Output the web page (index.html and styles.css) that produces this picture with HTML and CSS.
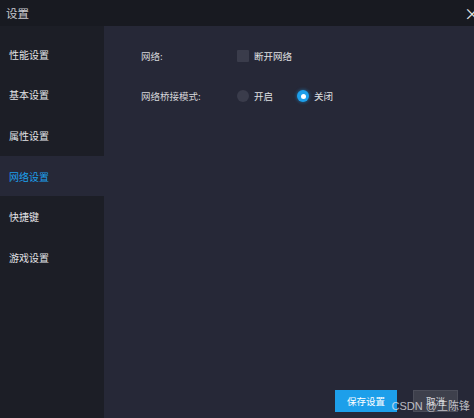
FILE: index.html
```html
<!DOCTYPE html>
<html lang="zh-CN">
<head>
  <meta charset="UTF-8"/>
  <title>设置</title>
  <link rel="stylesheet" href="styles.css">
</head>
<body>
  <div class="window">
    <header class="titlebar">
      <span class="title">设置</span>
      <span class="close-btn">×</span>
    </header>
    <div class="layout">
      <aside class="menu">
        <div class="menu-item">性能设置</div>
        <div class="menu-item">基本设置</div>
        <div class="menu-item">属性设置</div>
        <div class="menu-item active">网络设置</div>
        <div class="menu-item">快捷键</div>
        <div class="menu-item">游戏设置</div>
      </aside>
      <main class="panel">
        <div class="form">
          <div class="row">
            <span class="label">网络:</span>
            <label class="option">
              <span class="checkbox"></span>断开网络
            </label>
          </div>
          <div class="row">
            <span class="label">网络桥接模式:</span>
            <label class="option">
              <span class="radio"></span>开启
            </label>
            <label class="option">
              <span class="radio checked"></span>关闭
            </label>
          </div>
        </div>
        <footer class="actions">
          <button class="btn btn-primary">保存设置</button>
          <button class="btn btn-cancel">取消</button>
        </footer>
        <span class="watermark">CSDN @王陈锋</span>
      </main>
    </div>
  </div>
</body>
</html>
```

FILE: styles.css
```css
:root {
  --bg-title: #181a21;
  --bg-menu: #1c1e26;
  --bg-panel: #262837;
  --text: #d6d7db;
  --text-title: #c9cacf;
  --accent: #1d9fea;
  --control: #3a3c4b;
}

* { box-sizing:border-box; margin:0; padding:0 }
html, body {
  width:474px;
  height:418px;
  overflow:hidden;
  background: var(--bg-panel);
  font-family:"Noto Sans CJK SC","Noto Sans",sans-serif;
  color: var(--text);
}

.window {
  display:flex;
  flex-direction:column;
  height:100%;
}

/* TITLE BAR */
.titlebar {
  height:26px;
  flex:none;
  display:flex;
  align-items:center;
  justify-content:space-between;
  padding-left:6px;
  background: var(--bg-title);
  overflow:hidden;
}
.title {
  font-size:11.5px;
  color: var(--text-title);
}
.close-btn {
  font-size:16px;
  color:#e8e8e8;
  margin-right:-6px;
  line-height:1;
}

/* LAYOUT */
.layout {
  flex:1;
  display:flex;
  min-height:0;
}

/* MENU */
.menu {
  width:104px;
  flex:none;
  background: var(--bg-menu);
  padding-top:8px;
}
.menu-item {
  height:40.6px;
  display:flex;
  align-items:center;
  padding-left:9px;
  font-size:10px;
  color:#e2e3e6;
}
.menu-item.active {
  background: var(--bg-panel);
  color: var(--accent);
}

/* PANEL */
.panel {
  flex:1;
  display:flex;
  flex-direction:column;
  position:relative;
  padding:20px 16px 6px 37px;
}
.form {
  display:flex;
  flex-direction:column;
  gap:20px;
}
.row {
  display:flex;
  align-items:center;
  height:20px;
  font-size:9.5px;
}
.label {
  width:96px;
  color: var(--text);
}
.option {
  display:flex;
  align-items:center;
  gap:5px;
  margin-right:24px;
  color:#e0e1e4;
}
.checkbox {
  width:12px;
  height:12px;
  border-radius:1px;
  background: var(--control);
}
.radio {
  width:12px;
  height:12px;
  border-radius:50%;
  background: var(--control);
}
.radio.checked {
  background: var(--accent);
  box-shadow:0 0 3px 1px rgba(29,159,234,.35);
  display:flex;
  align-items:center;
  justify-content:center;
}
.radio.checked::after {
  content:"";
  width:5px;
  height:5px;
  border-radius:50%;
  background:#fff;
}

/* ACTIONS */
.actions {
  margin-top:auto;
  display:flex;
  justify-content:flex-end;
  gap:16px;
}
.btn {
  height:22px;
  border:none;
  font-family:inherit;
  font-size:9.5px;
  color:#fff;
}
.btn-primary {
  width:62px;
  background: var(--accent);
}
.btn-cancel {
  width:45px;
  background:#3e404c;
  border:1px solid #4b4d59;
  color:#d8d8dc;
}

.watermark {
  position:absolute;
  right:4px;
  bottom:5px;
  font-family:"Liberation Sans","Noto Sans CJK SC",sans-serif;
  font-size:11px;
  color:rgba(235,235,240,.75);
}
```
